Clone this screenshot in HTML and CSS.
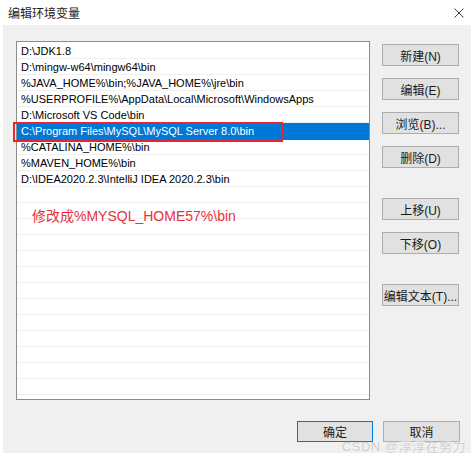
FILE: index.html
```html
<!DOCTYPE html>
<html>
  <head>
    <title>编辑环境变量</title>
    <link rel="stylesheet" href="styles.css">
  </head>
  <body>
    <div class="window">
      <div class="title-bar">
        <span class="title">编辑环境变量</span>
        <svg class="close" width="10" height="10" viewBox="0 0 10 10">
          <path d="M0.5 0.5 L9.5 9.5 M9.5 0.5 L0.5 9.5" stroke="#444" stroke-width="1" fill="none"/>
        </svg>
      </div>

      <div class="dialog">
        <div class="main">
          <div class="path-list">
            <div class="row">D:\JDK1.8</div>
            <div class="row">D:\mingw-w64\mingw64\bin</div>
            <div class="row">%JAVA_HOME%\bin;%JAVA_HOME%\jre\bin</div>
            <div class="row">%USERPROFILE%\AppData\Local\Microsoft\WindowsApps</div>
            <div class="row">D:\Microsoft VS Code\bin</div>
            <div class="row selected">C:\Program Files\MySQL\MySQL Server 8.0\bin</div>
            <div class="row">%CATALINA_HOME%\bin</div>
            <div class="row">%MAVEN_HOME%\bin</div>
            <div class="row">D:\IDEA2020.2.3\IntelliJ IDEA 2020.2.3\bin</div>
            <div class="row"></div>
            <div class="row"></div>
            <div class="row"></div>
            <div class="row"></div>
            <div class="row"></div>
            <div class="row"></div>
            <div class="row"></div>
            <div class="row"></div>
            <div class="row"></div>
            <div class="row"></div>
            <div class="row"></div>
            <div class="row"></div>
            <div class="row"></div>

            <!-- annotation drawn over the screenshot -->
            <div class="mark-box"></div>
            <div class="mark-note">修改成%MYSQL_HOME57%\bin</div>
          </div>

          <div class="side-buttons">
            <button class="button">新建(N)</button>
            <button class="button">编辑(E)</button>
            <button class="button">浏览(B)...</button>
            <button class="button">删除(D)</button>
            <button class="button spaced">上移(U)</button>
            <button class="button">下移(O)</button>
            <button class="button spaced">编辑文本(T)...</button>
          </div>
        </div>

        <div class="footer">
          <button class="button default">确定</button>
          <button class="button cancel">取消</button>
        </div>
      </div>

      <div class="watermark">CSDN @淳淳在努力</div>
    </div>
  </body>
</html>
```

FILE: styles.css
```css
body {
  margin: 0;
  background: #ffffff;
  font-family: "Liberation Sans", "Noto Sans CJK SC", sans-serif;
  color: #000;
}

.window {
  position: relative;
  width: 474px;
  height: 456px;
  overflow: hidden;
}

.title-bar {
  height: 25px;
  display: flex;
  align-items: center;
  justify-content: space-between;
  padding: 0 10px 0 8px;
}

.title {
  font-size: 12px;
  color: #222;
}

.close {
  margin-top: 1px;
}

.dialog {
  margin-left: 3px;
  width: 468px;
  height: 428px;
  background: #f0f0f0;
  box-sizing: border-box;
  padding: 16px 0 0 13px;
}

.main {
  display: flex;
  gap: 12px;
}

.path-list {
  position: relative;
  width: 354px;
  height: 359px;
  box-sizing: border-box;
  background: #fff;
  border: 1px solid #8c8c8c;
  padding-top: 1px;
  font-size: 11px;
}

.row {
  height: 16px;
  line-height: 16px;
  padding-left: 4px;
  border-bottom: 1px solid #f0f0f0;
  box-sizing: border-box;
  white-space: nowrap;
  overflow: hidden;
}

.row.selected {
  height: 17px;
  margin-bottom: -1px;
  background: #0078d7;
  color: #fff;
  border-bottom-color: #0078d7;
}

.mark-box {
  position: absolute;
  left: -4px;
  top: 80px;
  width: 270px;
  height: 20px;
  box-sizing: border-box;
  border: 2px solid #e8262e;
}

.mark-note {
  position: absolute;
  left: 15px;
  top: 164px;
  font-size: 14px;
  line-height: 20px;
  color: #ea2f3c;
  white-space: nowrap;
}

.side-buttons {
  display: flex;
  flex-direction: column;
  gap: 12px;
  padding-top: 3px;
}

.button {
  width: 77px;
  height: 22px;
  padding: 0;
  background: #e1e1e1;
  border: 1px solid #adadad;
  font-family: "Liberation Sans", "Noto Sans CJK SC", sans-serif;
  font-size: 12px;
  color: #1a1a1a;
}

.button.spaced {
  margin-top: 18px;
}

.footer {
  display: flex;
  gap: 10px;
  margin-top: 21px;
  padding-left: 281px;
}

.footer .button {
  height: 21px;
}

.button.default {
  width: 76px;
  border-color: #0078d7;
}

.watermark {
  position: absolute;
  right: 8px;
  bottom: 1px;
  font-size: 13px;
  color: rgba(200, 200, 200, 0.9);
  letter-spacing: 0.5px;
  text-shadow: 0 0 1px #fff;
}
```
